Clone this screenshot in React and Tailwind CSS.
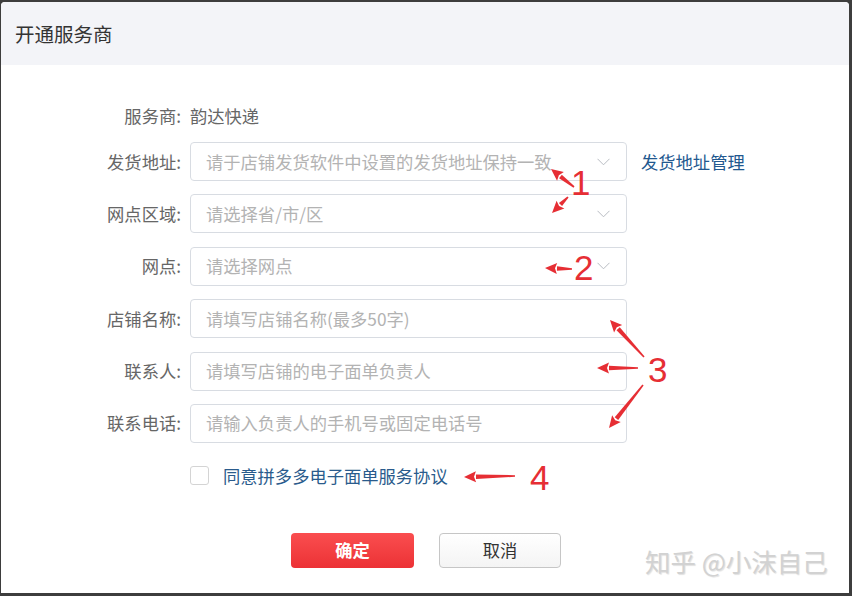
const font = "font-['Microsoft_YaHei','Noto_Sans_CJK_SC','Noto_Sans',sans-serif]";

const fields = [
  { label: "发货地址:", placeholder: "请于店铺发货软件中设置的发货地址保持一致", select: true, link: "发货地址管理" },
  { label: "网点区域:", placeholder: "请选择省/市/区", select: true },
  { label: "网点:", placeholder: "请选择网点", select: true },
  { label: "店铺名称:", placeholder: "请填写店铺名称(最多50字)" },
  { label: "联系人:", placeholder: "请填写店铺的电子面单负责人" },
  { label: "联系电话:", placeholder: "请输入负责人的手机号或固定电话号" },
];

// tail -> head, tapered shaft + filled head
const arrows = [
  [574, 187, 551, 169],
  [568, 197, 552, 213],
  [572, 269, 545, 268],
  [644, 357, 610, 320],
  [638, 368, 597, 368],
  [643, 385, 609, 428],
  [515, 476, 464, 477],
];

function Arrow({ a }) {
  const [x1, y1, x2, y2] = a;
  const dx = x2 - x1;
  const dy = y2 - y1;
  const len = Math.hypot(dx, dy);
  const ux = dx / len;
  const uy = dy / len;
  const nx = -uy;
  const ny = ux;
  const hl = 12;
  const hw = 5.5;
  const bx = x2 - ux * hl;
  const by = y2 - uy * hl;
  const shaft = [
    [x1 + nx * 0.8, y1 + ny * 0.8],
    [bx + nx * 2.2, by + ny * 2.2],
    [bx - nx * 2.2, by - ny * 2.2],
    [x1 - nx * 0.8, y1 - ny * 0.8],
  ];
  const head = [
    [x2, y2],
    [bx + nx * hw, by + ny * hw],
    [bx + ux * 2, by + uy * 2],
    [bx - nx * hw, by - ny * hw],
  ];
  const pts = (p) => p.map((q) => q.join(",")).join(" ");
  return (
    <g fill="#e62e34">
      <polygon points={pts(shaft)} />
      <polygon points={pts(head)} />
    </g>
  );
}

function Chevron() {
  return (
    <svg width="13" height="8" viewBox="0 0 13 8" className="shrink-0">
      <polyline points="0.5,0.8 6.5,6.8 12.5,0.8" fill="none" stroke="#b8bcc2" strokeWidth="1" />
    </svg>
  );
}

export default function App() {
  return (
    <div className={`relative w-[852px] h-[596px] bg-[#3d3d3d] pt-[2px] pl-[1px] ${font}`}>
      <div className="w-[848px] h-[591px] bg-white rounded-t-[4px] overflow-hidden flex flex-col">
        {/* header */}
        <div className="h-[63px] shrink-0 bg-[#f3f4f8] flex items-center pl-[14px] text-[19.5px] text-[#333]">
          开通服务商
        </div>

        {/* body */}
        <div className="flex flex-col pt-[31px]">
          <div className="flex items-center h-[39px] text-[17.3px] text-[#666]">
            <div className="w-[180px] text-right">服务商:</div>
            <div className="ml-[9px]">韵达快递</div>
          </div>

          <div className="flex flex-col gap-[13.4px] mt-[7px]">
            {fields.map((f, i) => (
              <div key={i} className="flex items-center h-[39px] text-[17.3px]">
                <div className="w-[180px] text-right text-[#666]">{f.label}</div>
                <div className="ml-[9px] w-[437px] h-[39px] border border-[#d8dce2] rounded-[4px] flex items-center justify-between pl-[15px] pr-[16px]">
                  <span className="text-[#b3b3b3] whitespace-nowrap">{f.placeholder}</span>
                  {f.select && <Chevron />}
                </div>
                {f.link && <div className="ml-[14px] text-[#22588f]">{f.link}</div>}
              </div>
            ))}
          </div>

          <div className="flex items-center mt-[23px] ml-[189px] h-[20px]">
            <div className="w-[19px] h-[19px] border border-[#d4d4d4] rounded-[3px] bg-white" />
            <div className="ml-[14px] text-[17.3px] text-[#2a5b8c]">同意拼多多电子面单服务协议</div>
          </div>

          <div className="flex justify-center gap-[25px] mt-[47px] pl-[2px]">
            <button className="w-[123px] h-[35px] rounded-[4px] bg-gradient-to-b from-[#fa4d4f] to-[#ec3135] text-white text-[17.3px] font-bold">
              确定
            </button>
            <button className="w-[122px] h-[35px] rounded-[4px] border border-[#c6c6c6] bg-gradient-to-b from-white to-[#f4f4f4] text-[#333] text-[17.3px]">
              取消
            </button>
          </div>
        </div>
      </div>

      {/* annotations */}
      <svg className="absolute left-0 top-0 pointer-events-none" width="852" height="596">
        {arrows.map((a, i) => (
          <Arrow key={i} a={a} />
        ))}
      </svg>
      <span className="absolute left-[571px] top-[165px] text-[35px] leading-[35px] text-[#e62e34] font-['Liberation_Sans',sans-serif]">1</span>
      <span className="absolute left-[574px] top-[250px] text-[35px] leading-[35px] text-[#e62e34] font-['Liberation_Sans',sans-serif]">2</span>
      <span className="absolute left-[648px] top-[352px] text-[35px] leading-[35px] text-[#e62e34] font-['Liberation_Sans',sans-serif]">3</span>
      <span className="absolute left-[530px] top-[460px] text-[35px] leading-[35px] text-[#e62e34] font-['Liberation_Sans',sans-serif]">4</span>

      {/* watermark */}
      <span className="absolute left-[645px] top-[548px] text-[25.5px] leading-none text-[#d2d2d2] [text-shadow:1px_1px_1px_rgba(0,0,0,0.12)] whitespace-nowrap">
        知乎 @小沫自己
      </span>
    </div>
  );
}
